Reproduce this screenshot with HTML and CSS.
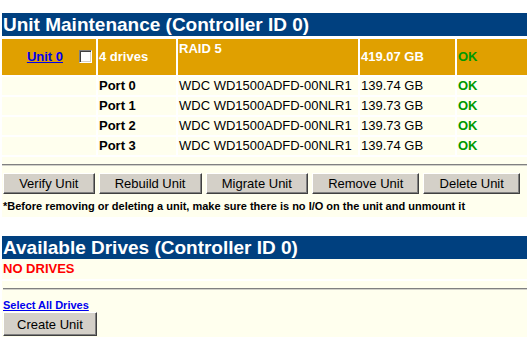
FILE: index.html
```html
<!DOCTYPE html>
<html>
<head>
    <title>Unit Maintenance</title>
    <meta charset="utf-8">
    <link rel="stylesheet" href="styles.css">
</head>
<body>
    <div class="page">
        <div class="section">
            <h1 class="title">Unit Maintenance (Controller ID 0)</h1>
            <table class="units">
                <colgroup>
                    <col class="c-unit">
                    <col class="c-port">
                    <col class="c-model">
                    <col class="c-size">
                    <col>
                </colgroup>
                <tr class="unit-row">
                    <td class="unit-cell"><a href="#">Unit 0</a><input type="checkbox" class="check"></td>
                    <td>4 drives</td>
                    <td class="top">RAID 5</td>
                    <td>419.07 GB</td>
                    <td class="ok">OK</td>
                </tr>
                <tr class="port-row">
                    <td></td>
                    <td class="port">Port 0</td>
                    <td>WDC WD1500ADFD-00NLR1</td>
                    <td>139.74 GB</td>
                    <td class="ok">OK</td>
                </tr>
                <tr class="port-row">
                    <td></td>
                    <td class="port">Port 1</td>
                    <td>WDC WD1500ADFD-00NLR1</td>
                    <td>139.73 GB</td>
                    <td class="ok">OK</td>
                </tr>
                <tr class="port-row">
                    <td></td>
                    <td class="port">Port 2</td>
                    <td>WDC WD1500ADFD-00NLR1</td>
                    <td>139.73 GB</td>
                    <td class="ok">OK</td>
                </tr>
                <tr class="port-row">
                    <td></td>
                    <td class="port">Port 3</td>
                    <td>WDC WD1500ADFD-00NLR1</td>
                    <td>139.74 GB</td>
                    <td class="ok">OK</td>
                </tr>
            </table>
            <div class="panel actions">
                <hr class="rule">
                <div class="buttons">
                    <button class="btn">Verify Unit</button>
                    <button class="btn">Rebuild Unit</button>
                    <button class="btn">Migrate Unit</button>
                    <button class="btn">Remove Unit</button>
                    <button class="btn">Delete Unit</button>
                </div>
                <p class="note">*Before removing or deleting a unit, make sure there is no I/O on the unit and unmount it</p>
            </div>
        </div>

        <div class="section drives">
            <h1 class="title">Available Drives (Controller ID 0)</h1>
            <div class="panel empty">NO DRIVES</div>
            <div class="panel create">
                <hr class="rule">
                <a href="#" class="select-all">Select All Drives</a>
                <div><button class="btn btn-create">Create Unit</button></div>
            </div>
        </div>
    </div>
</body>
</html>
```

FILE: styles.css
```css
html, body {
    overflow: hidden;
}
body {
    margin: 0;
    background: #fff;
    font-family: "Liberation Sans", Arial, sans-serif;
    font-size: 13px;
    color: #000;
}
.page { padding: 13px 0 0 2px; }

.title {
    margin: 0;
    padding-left: 1px;
    background: #00407f;
    color: #fff;
    font-size: 19px;
    font-weight: bold;
    line-height: 23px;
    height: 23px;
    white-space: nowrap;
}

.units {
    border-collapse: separate;
    border-spacing: 2px;
    table-layout: fixed;
    width: calc(100% + 8px);
    margin: 1px -6px 0 -2px;
}
.c-unit { width: 94px; }
.c-port { width: 78px; }
.c-model { width: 180px; }
.c-size { width: 95px; }
.units td {
    padding: 0 1px;
    white-space: nowrap;
    line-height: 16px;
}
.unit-row td {
    background: #e0a000;
    color: #fff;
    font-weight: bold;
    height: 34px;
    vertical-align: middle;
}
.unit-row td.top { vertical-align: top; padding-top: 2px; }
.unit-row .unit-cell { text-align: right; padding-right: 4px; }
.unit-cell a { color: #0000ee; }
.check {
    -webkit-appearance: none;
    appearance: none;
    box-sizing: border-box;
    width: 13px;
    height: 13px;
    margin: 0 0 0 16px;
    vertical-align: -2px;
    background: #fff;
    border: 1px solid;
    border-color: #808080 #fff #fff #808080;
    box-shadow: inset 1px 1px #404040, inset -1px -1px #d4d0c8;
}
.port-row td {
    background: #ffffee;
    height: 18px;
}
.port-row .port { font-weight: bold; }
.ok { font-weight: bold; }
.units .ok { color: #009900; }

.panel { background: #ffffee; }
.rule {
    margin: 0;
    border: 0;
    border-top: 1px solid #808080;
    border-bottom: 1px solid #d0d0c8;
}

.actions { padding-top: 7px; padding-bottom: 4px; }
.buttons {
    display: flex;
    gap: 4px;
    margin: 7px 7px 0 1px;
}
.btn {
    flex: auto;
    height: 21px;
    padding: 0 6px;
    font-family: "Liberation Sans", Arial, sans-serif;
    font-size: 13px;
    color: #000;
    background: #d4d0c8;
    border: 1px solid;
    border-color: #fff #404040 #404040 #fff;
    box-shadow: inset -1px -1px #808080;
}
.note {
    margin: 6px 0 0 1px;
    font-size: 11px;
    font-weight: bold;
    line-height: 13px;
    white-space: nowrap;
}

.drives { margin-top: 19px; }
.empty {
    color: #ff0000;
    font-weight: bold;
    height: 20px;
    line-height: 20px;
    padding-left: 1px;
}
.create { margin-top: 2px; padding: 7px 0 1px 1px; }
.select-all {
    display: inline-block;
    margin-top: 8px;
    color: #0000ee;
    font-size: 11px;
    font-weight: bold;
    line-height: 14px;
}
.btn-create {
    height: 24px;
    padding: 0 13px;
    box-shadow: inset -1px -1px #808080;
}
```
